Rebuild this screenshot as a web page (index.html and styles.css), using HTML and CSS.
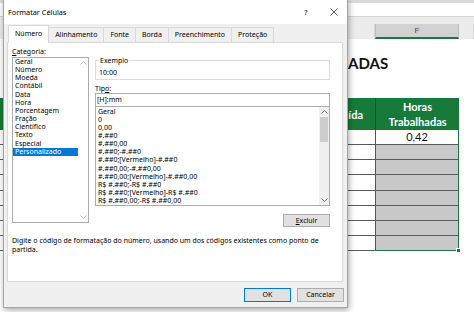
FILE: index.html
```html
<!DOCTYPE html>
<html lang="pt-BR">
<head>
<meta charset="utf-8">
<title>Formatar Células</title>
<link rel="stylesheet" href="styles.css">
</head>
<body>
<div class="sheet">
  <div class="ribbon"></div>
  <div class="formula"></div>
  <div class="band"></div>
  <div class="colheads">
    <div class="colhead"></div>
    <div class="colhead sel">F</div>
    <div class="colhead"></div>
  </div>
  <div class="titlerow">ADAS</div>
  <div class="grid">
    <div class="th th-left"><span>Saída</span></div>
    <div class="th th-f"><span>Horas<br>Trabalhadas</span></div>
    <div class="tb"></div>

    <div class="td"></div><div class="tf first">0,42</div><div class="tb"></div>
    <div class="td"></div><div class="tf"></div><div class="tb"></div>
    <div class="td"></div><div class="tf"></div><div class="tb"></div>
    <div class="td"></div><div class="tf"></div><div class="tb"></div>
    <div class="td"></div><div class="tf"></div><div class="tb"></div>
    <div class="td"></div><div class="tf"></div><div class="tb"></div>
    <div class="td"></div><div class="tf"></div><div class="tb"></div>
    <div class="td"></div><div class="tf last"></div><div class="tb"></div>
  </div>
  <span class="handle"></span>
</div>

<div class="dialog">
  <div class="titlebar">
    <span class="dlg-title">Formatar Células</span>
    <span class="help">?</span>
    <span class="close"><svg width="8" height="8" viewBox="0 0 8 8"><path d="M0.5 0.5L7.5 7.5M7.5 0.5L0.5 7.5" stroke="#333" stroke-width="0.8" fill="none"/></svg></span>
  </div>
  <div class="tabs">
    <div class="tab active">Número</div>
    <div class="tab">Alinhamento</div>
    <div class="tab">Fonte</div>
    <div class="tab">Borda</div>
    <div class="tab">Preenchimento</div>
    <div class="tab">Proteção</div>
  </div>
  <div class="panel">
    <div class="cols">
      <div class="col-left">
        <div class="lbl"><u>C</u>ategoria:</div>
        <div class="listbox cat">
          <ul class="items">
            <li>Geral</li>
            <li>Número</li>
            <li>Moeda</li>
            <li>Contábil</li>
            <li>Data</li>
            <li>Hora</li>
            <li>Porcentagem</li>
            <li>Fração</li>
            <li>Científico</li>
            <li>Texto</li>
            <li>Especial</li>
            <li class="selected">Personalizado</li>
          </ul>
          <div class="vscroll disabled">
            <span class="arrow"><svg width="7" height="4" viewBox="0 0 7 4"><polyline points="0.5,3.5 3.5,0.5 6.5,3.5" fill="none" stroke="currentColor" stroke-width="0.9"/></svg></span>
            <span class="arrow"><svg width="7" height="4" viewBox="0 0 7 4"><polyline points="0.5,0.5 3.5,3.5 6.5,0.5" fill="none" stroke="currentColor" stroke-width="0.9"/></svg></span>
          </div>
        </div>
      </div>
      <div class="col-right">
        <fieldset class="sample">
          <legend>Exemplo</legend>
          <div class="sample-val">10:00</div>
        </fieldset>
        <div class="lbl tipo">Tip<u>o</u>:</div>
        <div class="input">[H]:mm</div>
        <div class="listbox fmt">
          <ul class="items">
            <li>Geral</li>
            <li>0</li>
            <li>0,00</li>
            <li>#.##0</li>
            <li>#.##0,00</li>
            <li>#.##0;-#.##0</li>
            <li>#.##0;[Vermelho]-#.##0</li>
            <li>#.##0,00;-#.##0,00</li>
            <li>#.##0,00;[Vermelho]-#.##0,00</li>
            <li>R$ #.##0;-R$ #.##0</li>
            <li>R$ #.##0;[Vermelho]-R$ #.##0</li>
            <li>R$ #.##0,00;-R$ #.##0,00</li>
          </ul>
          <div class="vscroll">
            <span class="arrow"><svg width="7" height="4" viewBox="0 0 7 4"><polyline points="0.5,3.5 3.5,0.5 6.5,3.5" fill="none" stroke="currentColor" stroke-width="0.9"/></svg></span>
            <span class="thumb"></span>
            <span class="spacer"></span>
            <span class="arrow"><svg width="7" height="4" viewBox="0 0 7 4"><polyline points="0.5,0.5 3.5,3.5 6.5,0.5" fill="none" stroke="currentColor" stroke-width="0.9"/></svg></span>
          </div>
        </div>
        <div class="btnrow"><button class="btn"><u>E</u>xcluir</button></div>
      </div>
    </div>
    <p class="desc">Digite o código de formatação do número, usando um dos códigos existentes como ponto de<br>partida.</p>
  </div>
  <div class="buttons">
    <button class="btn ok">OK</button>
    <button class="btn">Cancelar</button>
  </div>
</div>
</body>
</html>
```

FILE: styles.css
```css
* { box-sizing: border-box; }
html, body { margin: 0; padding: 0; }
body {
  width: 474px;
  height: 312px;
  overflow: hidden;
  position: relative;
  background: #fff;
  font-family: "Noto Sans", "DejaVu Sans", sans-serif;
}

/* ---------- spreadsheet behind ---------- */
.sheet { width: 474px; height: 312px; background: #fff; }
.ribbon { height: 3px; background: #d9d9d9; }
.formula { height: 14px; background: #fff; border-bottom: 1px solid #d4d4d4; }
.band { height: 7px; background: #ececec; }
.colheads {
  display: grid;
  grid-template-columns: 375px 84px 1fr;
  height: 15px;
  background: #ececec;
}
.colhead { border-right: 1px solid #d6d6d6; }
.colhead.sel {
  background: #d2d2d2;
  border-left: 1px solid #bdbdbd;
  border-right: 1px solid #bdbdbd;
  border-bottom: 2px solid #217346;
  font: 8px/13px "Liberation Sans", sans-serif;
  color: #444;
  text-align: center;
}
.titlerow {
  height: 59px;
  padding: 15px 0 0 348px;
  font: bold 15px/18px Lato, "Liberation Sans", sans-serif;
  color: #111;
}
.grid {
  display: grid;
  grid-template-columns: 375px 84px 1fr;
  grid-template-rows: 32px repeat(8, 15.125px);
  font-family: Lato, "Liberation Sans", sans-serif;
}
.th {
  background: #187a3a;
  color: #fff;
  font-weight: bold;
  font-size: 11px;
  line-height: 15px;
  display: flex;
  align-items: center;
}
.th-left { justify-content: flex-end; padding-right: 12px; }
.th-f { justify-content: center; text-align: center; border-left: 1px solid #0f5228; }
.td { border-bottom: 1px solid #5a5a5a; }
.tf {
  border-left: 1px solid #217346;
  border-right: 1px solid #217346;
  border-bottom: 1px solid #5a5a5a;
  background: #c8c8c8;
}
.tf.first { background: #fff; text-align: center; font-size: 11px; line-height: 14px; color: #111; }
.tf.last { border-bottom-color: #217346; }
.handle {
  position: absolute;
  left: 456px;
  top: 248px;
  width: 5px;
  height: 5px;
  background: #217346;
  border: 1px solid #fff;
}

/* ---------- dialog ---------- */
.dialog {
  position: absolute;
  left: 3px;
  top: -1px;
  width: 345px;
  height: 309px;
  background: #f0f0f0;
  border: 1px solid #a6a6a6;
  box-shadow: 1px 2px 6px rgba(0, 0, 0, 0.35);
  display: flex;
  flex-direction: column;
  font-size: 7px;
  color: #000;
}
.titlebar {
  height: 24px;
  flex: none;
  background: #fff;
  display: flex;
  align-items: center;
  padding-left: 4px;
  font-size: 7.3px;
}
.dlg-title { flex: 1; }
.help { width: 8px; text-align: center; margin-right: 20px; font-size: 7.5px; }
.close { width: 8px; height: 8px; display: flex; margin-right: 9px; }

.tabs {
  height: 18px;
  flex: none;
  display: flex;
  align-items: flex-end;
  padding-left: 4px;
}
.tab {
  height: 15px;
  padding: 0 6px;
  border: 1px solid #d9d9d9;
  border-bottom: none;
  line-height: 14px;
  background: #f0f0f0;
  margin-right: -1px;
  white-space: nowrap;
}
.tab.active {
  height: 18px;
  line-height: 16px;
  background: #fff;
  position: relative;
  z-index: 1;
  margin-bottom: -1px;
}

.panel {
  height: 240px;
  flex: none;
  margin: 0 4px 0 3px;
  background: #fff;
  border: 1px solid #d9d9d9;
  padding: 4px 12px 0 4px;
}
.cols { display: flex; gap: 6px; }
.col-left { width: 77px; flex: none; }
.col-right { width: 235px; flex: none; }
.lbl { height: 9px; line-height: 9px; white-space: nowrap; }

.listbox {
  display: flex;
  border: 1px solid #acacac;
  background: #fff;
  overflow: hidden;
}
.listbox.cat { margin-top: 1px; height: 166px; }
.listbox.fmt { height: 100px; border-top-color: #acacac; }
.items {
  flex: 1;
  min-width: 0;
  list-style: none;
  margin: 0;
  padding: 0;
  line-height: 8.15px;
}
.fmt .items { padding-top: 0.5px; }
.items li { padding-left: 2px; white-space: nowrap; }
.items li.selected { background: #0078d7; color: #fff; }

.vscroll {
  width: 10px;
  flex: none;
  display: flex;
  flex-direction: column;
  align-items: center;
  color: #606060;
  background: #f0f0f0;
}
.vscroll.disabled { background: #fff; color: #b8b8b8; justify-content: space-between; }
.arrow { width: 10px; height: 10px; display: flex; align-items: center; justify-content: center; }
.thumb { width: 8px; height: 25px; background: #cdcdcd; }
.spacer { flex: 1; }

.sample {
  margin: 9px 0 0;
  padding: 3px 3px 2px;
  border: 1px solid #dcdcdc;
  min-width: 0;
}
.sample legend { padding: 0 1px; line-height: 9px; }
.sample-val { line-height: 9px; }
.tipo { margin-top: 4px; }
.input {
  height: 13px;
  border: 1px solid #acacac;
  border-bottom: none;
  padding-left: 1px;
  line-height: 12px;
  background: #fff;
}

.btnrow { display: flex; justify-content: flex-end; margin-top: 8px; }
.btn {
  width: 47px;
  height: 13px;
  padding: 0;
  border: 1px solid #adadad;
  background: #e1e1e1;
  font: inherit;
  font-size: 7px;
  line-height: 11px;
  color: #000;
}
.desc { margin: 9px 0 0; line-height: 9px; white-space: nowrap; }

.buttons {
  flex: 1;
  display: flex;
  justify-content: flex-end;
  align-items: flex-start;
  gap: 6px;
  padding: 6px 3px 0 0;
}
.buttons .btn { height: 14px; line-height: 12px; }
.btn.ok { border-color: #0078d7; }
```
